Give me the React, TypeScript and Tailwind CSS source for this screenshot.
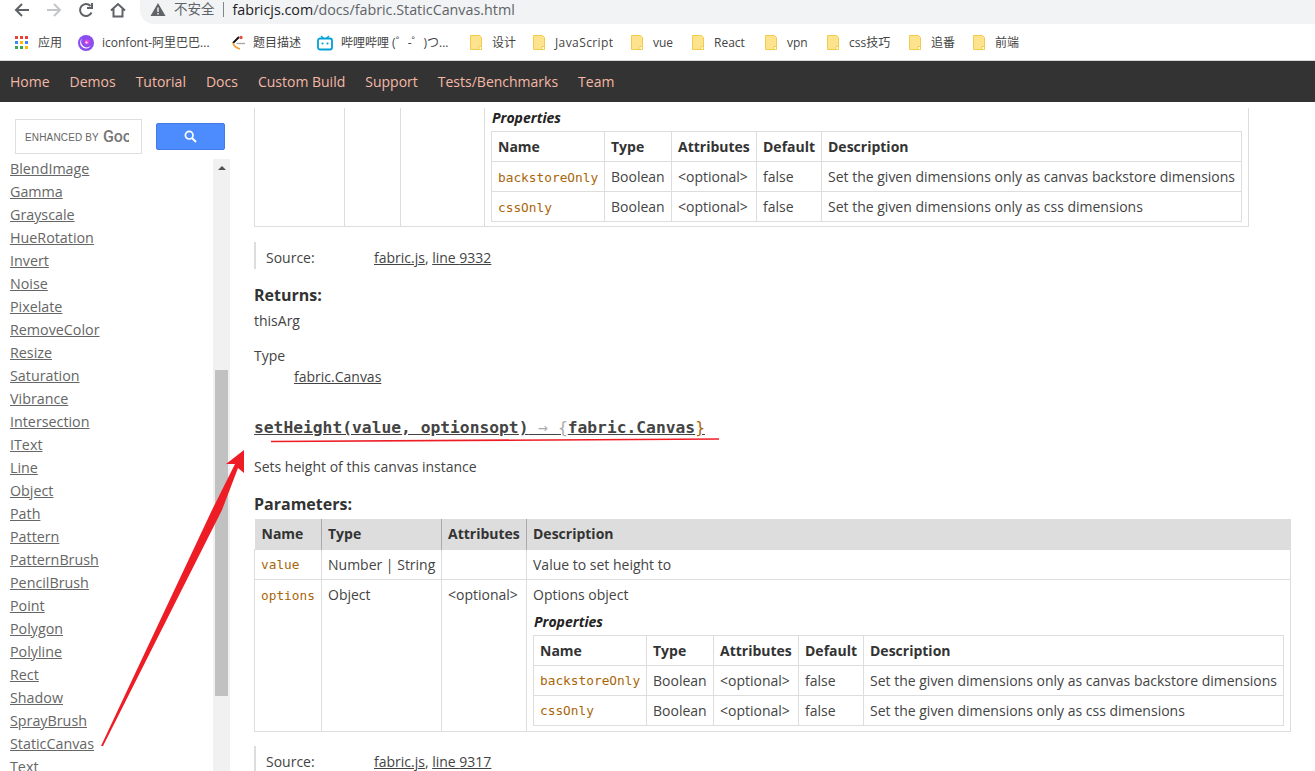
import React from "react";

const sans = "font-['Open_Sans',_'Noto_Sans_CJK_SC',_sans-serif]";

function Folder() {
  return (
    <svg width="12" height="15" viewBox="0 0 12 15" className="shrink-0">
      <path d="M.5.5h9l2 2v12H.5z" fill="#fee38f" stroke="#f2cd4c" />
      <path d="M9 11.5h2.5v3H9z" fill="#fff" stroke="#f2cd4c" />
    </svg>
  );
}

const folders = [
  { label: "设计", w: "w-[63px]", t: "" },
  { label: "JavaScript", w: "w-[98px]", t: "tracking-[0.4px]" },
  { label: "vue", w: "w-[61px]", t: "" },
  { label: "React", w: "w-[73px]", t: "" },
  { label: "vpn", w: "w-[62px]", t: "" },
  { label: "css技巧", w: "w-[82px]", t: "" },
  { label: "追番", w: "w-[64px]", t: "" },
  { label: "前端", w: "w-[60px]", t: "" },
];

function Bookmarks() {
  return (
    <div className={`flex items-center h-[37px] pl-[15px] pt-px text-[12px] text-[#444] bg-white border-b border-[#d9d9d9] ${sans}`}>
      <div className="flex items-center w-[63px] shrink-0">
        <svg width="14" height="14" viewBox="0 0 14 14" className="mr-[9px]">
          <rect x="0" y="0" width="3" height="3" fill="#ea4335" />
          <rect x="5" y="0" width="3" height="3" fill="#ea4335" />
          <rect x="10" y="0" width="3" height="3" fill="#ea4335" />
          <rect x="0" y="5" width="3" height="3" fill="#4285f4" />
          <rect x="5" y="5" width="3" height="3" fill="#fbbc04" />
          <rect x="10" y="5" width="3" height="3" fill="#4285f4" />
          <rect x="0" y="10" width="3" height="3" fill="#34a853" />
          <rect x="5" y="10" width="3" height="3" fill="#34a853" />
          <rect x="10" y="10" width="3" height="3" fill="#fbbc04" />
        </svg>
        <span>应用</span>
      </div>
      <div className="flex items-center w-[152px] shrink-0">
        <svg width="16" height="16" viewBox="0 0 16 16" className="mr-[8px]">
          <circle cx="8" cy="8" r="8" fill="#8a4df0" />
          <path d="M4.5 3a5.8 5.8 0 1 0 8.5 7.5 5 5 0 0 1-8.5-7.5z" fill="#fff" />
          <circle cx="9" cy="7" r="2.6" fill="#e845d8" />
          <circle cx="8.5" cy="7.5" r="1.1" fill="#fff" />
        </svg>
        <span className="whitespace-nowrap">iconfont-阿里巴巴...</span>
      </div>
      <div className="flex items-center w-[87px] shrink-0">
        <svg width="16" height="16" viewBox="0 0 16 16" className="mr-[7px]">
          <path d="M9 2 3 8" fill="none" stroke="#111" strokeWidth="1.8" />
          <path d="M3 8c1 3 3 5 7 6" fill="none" stroke="#f0a030" strokeWidth="1.8" />
          <path d="M6.5 8.5H15" stroke="#aaa" strokeWidth="1.4" />
          <circle cx="11" cy="2.5" r="1.7" fill="#e0523f" />
        </svg>
        <span>题目描述</span>
      </div>
      <div className="flex items-center w-[153px] shrink-0">
        <svg width="16" height="16" viewBox="0 0 16 16" className="mr-[8px]">
          <path d="M4 1l2.5 2.5M12 1 9.5 3.5" stroke="#00a1d6" strokeWidth="1.4" />
          <rect x="1" y="3.5" width="14" height="11" rx="2" fill="none" stroke="#00a1d6" strokeWidth="1.8" />
          <circle cx="5.5" cy="8.5" r="1.1" fill="#00a1d6" />
          <circle cx="10.5" cy="8.5" r="1.1" fill="#00a1d6" />
        </svg>
        <span className="whitespace-nowrap">哔哩哔哩 (゜-゜)つ...</span>
      </div>
      {folders.map((f) => (
        <div key={f.label} className={`flex items-center gap-[10px] shrink-0 ${f.w}`}>
          <Folder />
          <span className={`whitespace-nowrap ${f.t}`}>{f.label}</span>
        </div>
      ))}
    </div>
  );
}

function Toolbar() {
  const s = { fill: "none", strokeWidth: 2 } as const;
  return (
    <div className={`flex h-[24px] bg-white ${sans}`}>
      <div className="flex items-center w-[140px] shrink-0 pl-[14px] gap-[16px] pb-[4px]">
        <svg width="16" height="16" viewBox="0 0 16 16"><path d="M15 8H2M8 2 2 8l6 6" {...s} stroke="#5f6368" /></svg>
        <svg width="16" height="16" viewBox="0 0 16 16"><path d="M1 8h13M8 2l6 6-6 6" {...s} stroke="#c4c7ca" /></svg>
        <svg width="16" height="16" viewBox="0 0 16 16"><path d="M13.5 10.5A6 6 0 1 1 12.5 4M14 1v5H9" {...s} stroke="#5f6368" /></svg>
        <svg width="16" height="16" viewBox="0 0 16 16"><path d="M1 8.5 8 2l7 6.5M3.5 7v7.5h9V7" {...s} stroke="#5f6368" /></svg>
      </div>
      <div className="flex flex-1 items-center bg-[#f1f3f4] rounded-bl-[14px] pl-[10px] pb-[5px] text-[14px] text-[#5f6368]">
        <svg width="16" height="15" viewBox="0 0 16 15" className="mr-[8px]"><path d="M8 1 15.5 14H.5z" fill="#5f6368" /><path d="M7.3 5.5h1.4v4.5H7.3zM7.3 11h1.4v1.4H7.3z" fill="#f1f3f4" /></svg>
        <span className="text-[13.5px] mr-[8px]">不安全</span>
        <span className="w-px h-[15px] bg-[#80868b] mr-[9px]" />
        <span className="whitespace-nowrap text-[14.3px]"><span className="text-[#202124]">fabricjs.com</span>/docs/fabric.StaticCanvas.html</span>
      </div>
    </div>
  );
}

const navItems = ["Home", "Demos", "Tutorial", "Docs", "Custom Build", "Support", "Tests/Benchmarks", "Team"];

function Nav() {
  return (
    <nav className={`flex items-center gap-[20px] h-[41px] pl-[10px] bg-[#333] text-[14px] text-[#f5b8a6] ${sans}`}>
      {navItems.map((n) => <span key={n}>{n}</span>)}
    </nav>
  );
}

const sideItems = ["BlendImage","Gamma","Grayscale","HueRotation","Invert","Noise","Pixelate","RemoveColor","Resize","Saturation","Vibrance","Intersection","IText","Line","Object","Path","Pattern","PatternBrush","PencilBrush","Point","Polygon","Polyline","Rect","Shadow","SprayBrush","StaticCanvas","Text"];

function Sidebar() {
  return (
    <aside className={`flex flex-col w-[230px] shrink-0 h-full overflow-hidden ${sans}`}>
      <div className="flex items-center h-[56px] shrink-0 pl-[15px] pt-[13px]">
        <div className="flex items-center w-[127px] h-[35px] border border-[#dfdfdf] pl-[9px] pt-px overflow-hidden whitespace-nowrap">
          <span className="text-[10px] text-[#666] tracking-[0.15px] font-['Liberation_Sans',_sans-serif] mr-[4px]">ENHANCED BY</span>
          <span className="text-[16px] font-medium text-[#777] w-[26px] overflow-hidden font-['Roboto',_sans-serif]">Google</span>
        </div>
        <div className="flex items-center justify-center w-[69px] h-[27px] ml-[14px] bg-[#4d8cff] rounded-[2px] border border-[#4479e6]">
          <svg width="13" height="13" viewBox="0 0 13 13"><circle cx="5.2" cy="5.2" r="3.8" fill="none" stroke="#fff" strokeWidth="1.7" /><path d="m8 8 4 4" stroke="#fff" strokeWidth="1.9" /></svg>
        </div>
      </div>
      <div className="flex flex-1 min-h-0">
        <ul className="flex-1 pl-[10px] -mt-px overflow-hidden text-[14.3px] leading-[23px] text-[#666] underline">
          {sideItems.map((s) => <li key={s} className="h-[23px]">{s}</li>)}
        </ul>
        <div className="relative w-[17px] mt-px bg-[#f1f1f1] shrink-0">
          <div className="flex items-center justify-center h-[17px]">
            <div className="w-0 h-0 border-x-[4px] border-x-transparent border-b-[4px] border-b-[#505050]" />
          </div>
          <div className="absolute left-[2px] top-[211px] w-[13px] h-[326px] bg-[#c1c1c1]" />
        </div>
      </div>
    </aside>
  );
}

const mono = "font-['DejaVu_Sans_Mono',_monospace] text-[12.8px] text-[#a9660a]";
const td = "border border-[#ddd] px-[6px] align-middle";
const thSep = "border-t border-b border-l border-[#ddd] border-r-[#aaa] px-[6px] text-left font-bold align-middle text-[#333]";

function PropsTable() {
  return (
    <div>
      <div className="h-[23px] leading-[20px] font-bold italic text-[#222] pl-px">Properties</div>
      <table className="table-fixed border-collapse w-[751px] text-[14px]">
        <colgroup>
          <col className="w-[113px]" /><col className="w-[67px]" /><col className="w-[85px]" /><col className="w-[65px]" /><col />
        </colgroup>
        <thead>
          <tr className="h-[30px]">
            <th className={thSep}>Name</th><th className={thSep}>Type</th><th className={thSep}>Attributes</th><th className={thSep}>Default</th><th className="border border-[#ddd] px-[6px] text-left font-bold text-[#333]">Description</th>
          </tr>
        </thead>
        <tbody>
          <tr className="h-[30px]">
            <td className={td}><span className={mono}>backstoreOnly</span></td><td className={td}>Boolean</td><td className={td}>&lt;optional&gt;</td><td className={td}>false</td><td className={`${td} whitespace-nowrap`}>Set the given dimensions only as canvas backstore dimensions</td>
          </tr>
          <tr className="h-[30px]">
            <td className={td}><span className={mono}>cssOnly</span></td><td className={td}>Boolean</td><td className={td}>&lt;optional&gt;</td><td className={td}>false</td><td className={td}>Set the given dimensions only as css dimensions</td>
          </tr>
        </tbody>
      </table>
    </div>
  );
}

function Source({ line }: { line: string }) {
  return (
    <div className="flex items-start h-[27px] border-l-2 border-[#ddd] pl-[10px] pt-[6px] leading-[20px] text-[14px]">
      <span className="w-[108px]">Source:</span>
      <span><span className="underline">fabric.js</span>, <span className="underline">line {line}</span></span>
    </div>
  );
}

function Main() {
  return (
    <main className={`flex-1 min-w-0 h-full overflow-hidden pl-[24px] pt-[6px] text-[14px] text-[#444] ${sans}`}>
      <table className="table-fixed border-collapse w-[995px]">
        <colgroup><col className="w-[90px]" /><col className="w-[56px]" /><col className="w-[84px]" /><col /></colgroup>
        <tbody>
          <tr>
            <td className="border-x border-b border-[#ddd]" /><td className="border-x border-b border-[#ddd]" /><td className="border-x border-b border-[#ddd]" />
            <td className="border-x border-b border-[#ddd] px-[6px] pb-[4px] align-top"><PropsTable /></td>
          </tr>
        </tbody>
      </table>
      <div className="mt-[15px]"><Source line="9332" /></div>
      <h4 className="mt-[15px] text-[16px] leading-[22px] font-bold text-[#333]">Returns:</h4>
      <p className="mt-[5px] leading-[20px]">thisArg</p>
      <p className="mt-[15px] leading-[20px]">Type</p>
      <p className="ml-[40px] mt-px leading-[20px] underline">fabric.Canvas</p>
      <h4 className="mt-[30px] h-[22px] leading-[22px] whitespace-nowrap font-['DejaVu_Sans_Mono',_monospace] text-[16.3px] font-bold text-[#444] underline">
        setHeight(value, optionsopt)<span className="font-normal text-[#aaa]"> → </span><span className="font-normal text-[#aaa]">{"{"}</span>fabric.Canvas<span className="font-normal text-[#a9660a]">{"}"}</span>
      </h4>
      <p className="mt-[18px] leading-[20px]">Sets height of this canvas instance</p>
      <h4 className="mt-[16px] text-[16px] leading-[22px] font-bold text-[#333]">Parameters:</h4>
      <table className="table-fixed border-collapse w-[1037px] mt-[4px]">
        <colgroup><col className="w-[67px]" /><col className="w-[120px]" /><col className="w-[85px]" /><col /></colgroup>
        <thead>
          <tr className="h-[30px] bg-[#ddd] text-[#333]">
            <th className="border-r border-[#aaa] px-[7px] text-left font-bold">Name</th>
            <th className="border-r border-[#aaa] px-[6px] text-left font-bold">Type</th>
            <th className="border-r border-[#aaa] px-[6px] text-left font-bold">Attributes</th>
            <th className="px-[6px] text-left font-bold">Description</th>
          </tr>
        </thead>
        <tbody>
          <tr className="h-[30px]">
            <td className={td}><span className={mono}>value</span></td><td className={`${td} whitespace-nowrap`}>Number | String</td><td className={td} /><td className={td}>Value to set height to</td>
          </tr>
          <tr>
            <td className={`${td} align-top pt-[4px]`}><span className={mono}>options</span></td>
            <td className={`${td} align-top pt-[4px]`}>Object</td>
            <td className={`${td} align-top pt-[4px]`}>&lt;optional&gt;</td>
            <td className={`${td} align-top pt-[5px] pb-[5px]`}>
              <div className="h-[20px] leading-[20px] mb-[7px]">Options object</div>
              <PropsTable />
            </td>
          </tr>
        </tbody>
      </table>
      <div className="mt-[14px]"><Source line="9317" /></div>
    </main>
  );
}

export default function App() {
  return (
    <div className="relative flex flex-col w-[1315px] h-[771px] overflow-hidden bg-white">
      <Toolbar />
      <Bookmarks />
      <Nav />
      <div className="flex flex-1 min-h-0">
        <Sidebar />
        <Main />
      </div>
      <svg className="absolute inset-0 pointer-events-none" width="1315" height="771" viewBox="0 0 1315 771">
        <path d="M101 746 212 510 235 464 226 464 244 450 244 473 238 468 222 510 103 746z" fill="#ee1c25" />
        <path d="M271 441.5 719 439" stroke="#ee1c25" strokeWidth="1.6" fill="none" />
      </svg>
    </div>
  );
}
